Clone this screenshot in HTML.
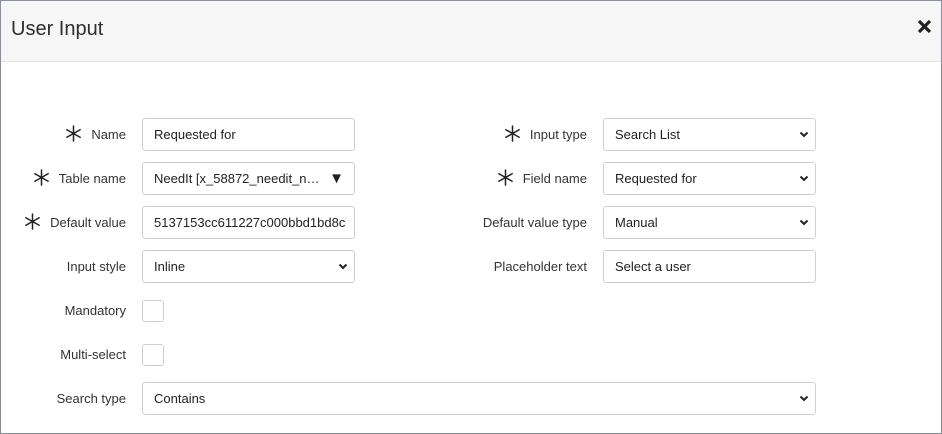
<!DOCTYPE html>
<html><head><style>
body{margin:0;width:942px;height:434px;overflow:hidden;background:#fff;font-family:"Liberation Sans",sans-serif;}
.frame{position:absolute;left:0;top:0;width:940px;height:432px;border:1px solid #8a8f96;}
.hdr{position:absolute;left:1px;top:1px;width:940px;height:60px;background:#f6f6f6;border-bottom:1px solid #e4e4e4;}
.title{position:absolute;left:10px;top:17px;font-size:20px;color:#2e2e2e;}
.x{position:absolute;left:916px;top:18px;}
.lbl{position:absolute;font-size:13px;color:#333;text-align:right;line-height:33px;white-space:nowrap;}
.in{position:absolute;height:31px;border:1px solid #cfcfcf;border-radius:3px;font-size:13px;color:#222;line-height:31px;padding-left:11px;box-sizing:content-box;background:#fff;overflow:hidden;white-space:nowrap;}
.cv{position:absolute;right:6px;top:12px;}
.cb{position:absolute;width:20px;height:20px;border:1px solid #cfcfcf;border-radius:3px;left:142px;}
.ast{display:inline-block;vertical-align:-3px;margin-right:9px;}
</style></head><body>
<svg width="0" height="0" style="position:absolute"><defs>
<symbol id="a" viewBox="0 0 18 18"><g stroke="#222" stroke-width="1.6" stroke-linecap="round"><path d="M9 1V17M2 5L16 13M2 13L16 5"/></g></symbol>
<symbol id="c" viewBox="0 0 10 7"><path d="M1.5 1.5L5 5L8.5 1.5" fill="none" stroke="#222" stroke-width="2"/></symbol>
</defs></svg>
<div class="frame"></div>
<div class="hdr"><div class="title">User Input</div><div class="x"><svg width="15" height="15" viewBox="0 0 15 15"><path d="M2 2L13 13M13 2L2 13" stroke="#222" stroke-width="3.2"/></svg></div></div>

<div class="lbl" style="right:816px;top:118px"><svg class="ast" width="17" height="17"><use href="#a"/></svg>Name</div>
<div class="in" style="left:142px;top:118px;width:200px">Requested for</div>
<div class="lbl" style="right:816px;top:162px"><svg class="ast" width="17" height="17"><use href="#a"/></svg>Table name</div>
<div class="in" style="left:142px;top:162px;width:200px">NeedIt [x_58872_needit_n…<span style="position:absolute;right:10px;top:0;font-size:15px">▼</span></div>
<div class="lbl" style="right:816px;top:206px"><svg class="ast" width="17" height="17"><use href="#a"/></svg>Default value</div>
<div class="in" style="left:142px;top:206px;width:200px">5137153cc611227c000bbd1bd8c</div>
<div class="lbl" style="right:816px;top:250px">Input style</div>
<div class="in" style="left:142px;top:250px;width:200px">Inline<svg class="cv" width="10" height="7"><use href="#c"/></svg></div>
<div class="lbl" style="right:816px;top:294px">Mandatory</div>
<div class="cb" style="top:300px"></div>
<div class="lbl" style="right:816px;top:338px">Multi-select</div>
<div class="cb" style="top:344px"></div>
<div class="lbl" style="right:816px;top:382px">Search type</div>
<div class="in" style="left:142px;top:382px;width:661px">Contains<svg class="cv" width="10" height="7"><use href="#c"/></svg></div>

<div class="lbl" style="right:355px;top:118px"><svg class="ast" width="17" height="17"><use href="#a"/></svg>Input type</div>
<div class="in" style="left:603px;top:118px;width:200px">Search List<svg class="cv" width="10" height="7"><use href="#c"/></svg></div>
<div class="lbl" style="right:355px;top:162px"><svg class="ast" width="17" height="17"><use href="#a"/></svg>Field name</div>
<div class="in" style="left:603px;top:162px;width:200px">Requested for<svg class="cv" width="10" height="7"><use href="#c"/></svg></div>
<div class="lbl" style="right:355px;top:206px">Default value type</div>
<div class="in" style="left:603px;top:206px;width:200px">Manual<svg class="cv" width="10" height="7"><use href="#c"/></svg></div>
<div class="lbl" style="right:355px;top:250px">Placeholder text</div>
<div class="in" style="left:603px;top:250px;width:200px">Select a user</div>
</body></html>
